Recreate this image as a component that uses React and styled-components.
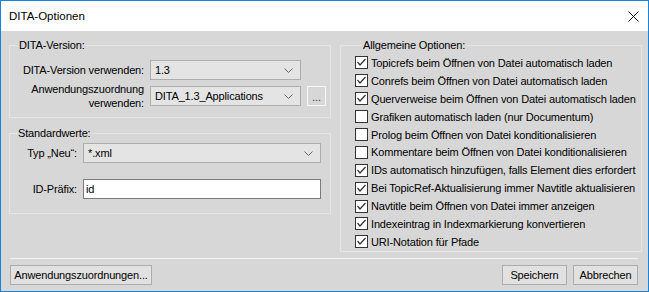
import styled, { createGlobalStyle } from "styled-components";

const GlobalStyle = createGlobalStyle`
  body {
    margin: 0;
    font-family: "Liberation Sans", Arial, sans-serif;
    font-size: 11px;
    color: #000;
  }
  * { box-sizing: border-box; }
`;

const Window = styled.div`
  width: 649px;
  height: 292px;
  border: 1px solid #1883d7;
  background: #d7d7d7;
  display: flex;
  flex-direction: column;
  letter-spacing: -0.15px;
`;

const TitleBar = styled.div`
  height: 30px;
  background: #fff;
  display: flex;
  align-items: center;
  justify-content: space-between;
  padding: 0 9px 0 8px;
  flex-shrink: 0;
`;

const Title = styled.span`
  font-size: 11.5px;
  letter-spacing: 0;
`;

const Columns = styled.div`
  display: flex;
  gap: 9px;
  padding: 7px 6px 0 8px;
`;

const LeftColumn = styled.div`
  width: 322px;
  display: flex;
  flex-direction: column;
  gap: 8px;
`;

const Group = styled.fieldset`
  margin: 0;
  min-width: 0;
  border: 1px solid #e6e6e6;
  padding: ${(p) => p.$pad || "0"};
  ${(p) => p.$height && `height: ${p.$height}px;`}
`;

const Legend = styled.legend`
  margin-left: 7px;
  padding: 0 1px;
  line-height: 14px;
`;

const VersionGrid = styled.div`
  display: grid;
  grid-template-columns: 133px 151px 19px;
  grid-auto-rows: 20px;
  column-gap: 6px;
  row-gap: 6px;
  align-items: center;
`;

const DefaultsGrid = styled.div`
  display: grid;
  grid-template-columns: 67px 238px;
  grid-auto-rows: 20px;
  column-gap: 6px;
  row-gap: 16px;
  align-items: center;
`;

const Label = styled.label`
  text-align: right;
  line-height: 14px;
`;

const Combo = styled.div`
  height: 20px;
  border: 1px solid #adadad;
  background: #e4e4e4;
  display: flex;
  align-items: center;
  justify-content: space-between;
  padding: 0 7px 0 4px;
`;

const TextInput = styled.div`
  height: 20px;
  border: 1px solid #7a7a7a;
  background: #fff;
  display: flex;
  align-items: center;
  padding: 0 2px;
`;

const DotsButton = styled.button`
  height: 20px;
  width: 19px;
  padding: 0;
  border: 1px solid #f7f7f7;
  background: #d7d7d7;
  font-family: inherit;
  font-size: 11px;
  color: #3a2a55;
  line-height: 20px;
`;

const RightGroup = styled(Group)`
  flex: 1;
`;

const CheckRow = styled.div`
  height: 17.9px;
  display: flex;
  align-items: center;
  gap: 3px;
  white-space: nowrap;
`;

const Box = styled.span`
  width: 13px;
  height: 13px;
  border: 1px solid #333;
  background: #fff;
  display: inline-flex;
  flex-shrink: 0;
`;

const Separator = styled.div`
  margin: 6px 10px 0 9px;
  height: 1px;
  background: #f2f2f2;
`;

const Footer = styled.div`
  display: flex;
  align-items: center;
  padding: 6px 10px 0 9px;
  gap: 6px;
`;

const Button = styled.button`
  height: 20px;
  width: ${(p) => p.$w}px;
  border: 1px solid #adadad;
  background: #e1e1e1;
  font-family: inherit;
  font-size: 11px;
  letter-spacing: -0.15px;
  color: #000;
  padding: 0;
  ${(p) => p.$push && "margin-left: auto;"}
`;

const Chevron = () => (
  <svg width="9" height="5" viewBox="0 0 9 5">
    <polyline points="0.5,0.5 4.5,4.5 8.5,0.5" fill="none" stroke="#666" strokeWidth="1" />
  </svg>
);

const Check = ({ checked, label }) => (
  <CheckRow>
    <Box>
      {checked && (
        <svg width="11" height="11" viewBox="0 0 11 11">
          <polyline points="1.5,5 4,8 9.5,2" fill="none" stroke="#333" strokeWidth="1.2" />
        </svg>
      )}
    </Box>
    {label}
  </CheckRow>
);

const options = [
  [true, "Topicrefs beim Öffnen von Datei automatisch laden"],
  [true, "Conrefs beim Öffnen von Datei automatisch laden"],
  [true, "Querverweise beim Öffnen von Datei automatisch laden"],
  [false, "Grafiken automatisch laden (nur Documentum)"],
  [false, "Prolog beim Öffnen von Datei konditionalisieren"],
  [false, "Kommentare beim Öffnen von Datei konditionalisieren"],
  [true, "IDs automatisch hinzufügen, falls Element dies erfordert"],
  [true, "Bei TopicRef-Aktualisierung immer Navtitle aktualisieren"],
  [true, "Navtitle beim Öffnen von Datei immer anzeigen"],
  [true, "Indexeintrag in Indexmarkierung konvertieren"],
  [true, "URI-Notation für Pfade"],
];

export default function App() {
  return (
    <>
      <GlobalStyle />
      <Window>
        <TitleBar>
          <Title>DITA-Optionen</Title>
          <svg width="11" height="11" viewBox="0 0 11 11">
            <path d="M0.5,0.5 L10.5,10.5 M10.5,0.5 L0.5,10.5" stroke="#111" strokeWidth="1" />
          </svg>
        </TitleBar>
        <Columns>
          <LeftColumn>
            <Group $pad="8px 0 10px 1px" $height={80}>
              <Legend>DITA-Version:</Legend>
              <VersionGrid>
                <Label>DITA-Version verwenden:</Label>
                <Combo>
                  <span>1.3</span>
                  <Chevron />
                </Combo>
                <span />
                <Label>
                  Anwendungszuordnung
                  <br />
                  verwenden:
                </Label>
                <Combo>
                  <span>DITA_1.3_Applications</span>
                  <Chevron />
                </Combo>
                <DotsButton>...</DotsButton>
              </VersionGrid>
            </Group>
            <Group $pad="3px 0 13px 0" $height={88}>
              <Legend>Standardwerte:</Legend>
              <DefaultsGrid>
                <Label>Typ „Neu“:</Label>
                <Combo>
                  <span>*.xml</span>
                  <Chevron />
                </Combo>
                <Label>ID-Präfix:</Label>
                <TextInput>id</TextInput>
              </DefaultsGrid>
            </Group>
          </LeftColumn>
          <RightGroup $pad="2px 0 0 14px" $height={214}>
            <Legend>Allgemeine Optionen:</Legend>
            {options.map(([checked, label]) => (
              <Check key={label} checked={checked} label={label} />
            ))}
          </RightGroup>
        </Columns>
        <Separator />
        <Footer>
          <Button $w={142}>Anwendungszuordnungen...</Button>
          <Button $w={65} $push>Speichern</Button>
          <Button $w={65}>Abbrechen</Button>
        </Footer>
      </Window>
    </>
  );
}
